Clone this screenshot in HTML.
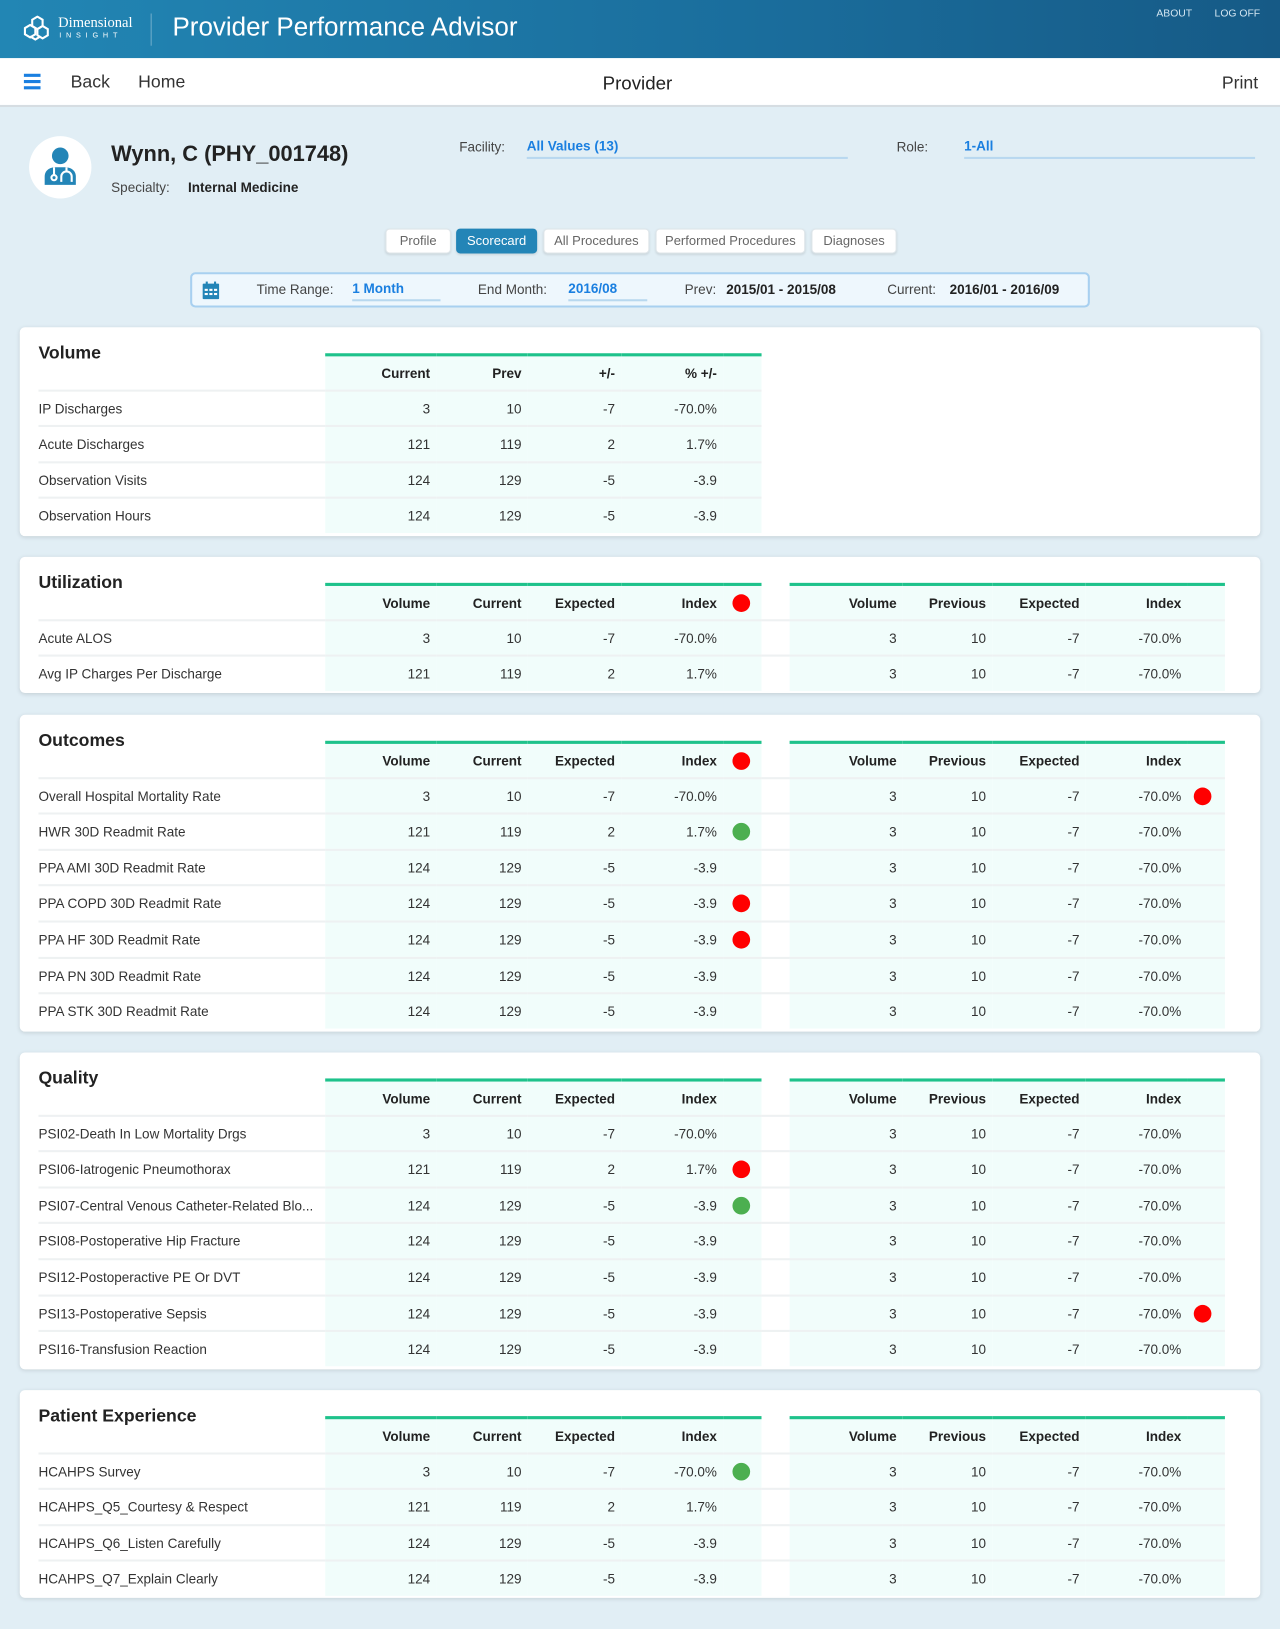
<!DOCTYPE html>
<html><head><meta charset="utf-8"><style>
*{box-sizing:border-box;margin:0;padding:0}
html,body{width:1280px;height:1629px;overflow:hidden;background:#e1eef5}
#w{position:absolute;left:0;top:0;width:1232px;height:1568px;transform:scale(1.03896);transform-origin:0 0;background:#e1eef5;font-family:"Liberation Sans",sans-serif;color:#333}
.top{position:absolute;left:0;top:0;width:1232px;height:56px;background:linear-gradient(90deg,#2286b4,#1a6d9c 60%,#165a86)}
.nav{position:absolute;left:0;top:56px;width:1232px;height:47px;background:#fff;border-bottom:2px solid #d6dde2}
.card{position:absolute;left:19px;width:1194px;background:#fff;border-radius:5px;box-shadow:0 1px 4px rgba(0,0,0,.12)}
.title{position:absolute;left:18px;top:15px;font-size:17px;font-weight:bold;color:#222;z-index:2}
.rows{position:absolute;left:18px;top:25px}
.r{display:flex;height:34.6px;font-size:13px;color:#333}
.r>div{line-height:34px;border-top:2px solid #eef1f2}
.lb{width:276px;white-space:nowrap;overflow:hidden}
.c{background:#f1fdfb;text-align:right;padding-right:6px}
.a1{width:107px}.a2{width:88px}.a3{width:90px}.a4{width:98px}.a5{width:37px}
.b1{width:109px}.b2{width:86px}.b3{width:90px}.b4{width:98px}.b5{width:36px}
.gap{width:27px;background:#fff}
.h>div{border-top:3px solid #1ec28b;font-weight:bold;color:#222;line-height:33px}
.h>.lb,.h>.gap{border-top:3px solid transparent}
.d{display:inline-block;width:17px;height:17px;border-radius:50%;vertical-align:middle;margin-top:-2px}
.R{background:#f00}.G{background:#4caf50}
.a5 .d{margin-left:-2px}.b5 .d{margin-left:-8px}
.a5,.b5{text-align:center;padding-right:0}
.tab{position:absolute;top:220px;height:24px;background:#fff;border:1px solid #dfe6ea;border-radius:4px;font-size:12.5px;color:#666;text-align:center;line-height:22px;box-shadow:0 1px 2px rgba(0,0,0,.1)}
</style></head><body><div id="w">
<div class="top">
  <svg style="position:absolute;left:22px;top:15px" width="28" height="27" viewBox="0 0 28 27"><g fill="none" stroke="#fff" stroke-width="2"><path d="M9 4l5-3 5 3v6l-5 3-5-3z"/><path d="M2 12l5-3 5 3v6l-5 3-5-3z"/><path d="M14 13l5-3 5 3v6l-5 3-5-3z"/><path d="M7 20l5 3 5-3"/></g></svg>
  <div style="position:absolute;left:56px;top:15px;font-family:'Liberation Serif',serif;font-size:14px;color:#fff">Dimensional</div>
  <div style="position:absolute;left:57px;top:31px;font-size:7px;letter-spacing:4.6px;color:#fff">INSIGHT</div>
  <div style="position:absolute;left:145px;top:13px;width:1px;height:31px;background:rgba(255,255,255,.35)"></div>
  <div style="position:absolute;left:166px;top:12px;font-size:25px;color:#fff">Provider Performance Advisor</div>
  <div style="position:absolute;left:1113px;top:8px;font-size:10px;color:#d3e6f2">ABOUT</div>
  <div style="position:absolute;left:1169px;top:8px;font-size:10px;color:#d3e6f2">LOG OFF</div>
</div>
<div class="nav">
  <div style="position:absolute;left:23px;top:15px;width:16px;height:3px;background:#1a7fe0;box-shadow:0 6px 0 #1a7fe0,0 12px 0 #1a7fe0"></div>
  <div style="position:absolute;left:68px;top:13px;font-size:17px;color:#333">Back</div>
  <div style="position:absolute;left:133px;top:13px;font-size:17px;color:#333">Home</div>
  <div style="position:absolute;left:580px;top:14px;font-size:18px;color:#222">Provider</div>
  <div style="position:absolute;left:1176px;top:14px;font-size:17px;color:#333">Print</div>
</div>
<div style="position:absolute;left:28px;top:131px;width:60px;height:60px;border-radius:50%;background:#fff"></div>
<svg style="position:absolute;left:40px;top:140px" width="36" height="40" viewBox="0 0 36 40"><circle cx="18" cy="10" r="8" fill="#2385b7"/><path d="M3 38v-8c0-6 5-9 10-9h10c5 0 10 3 10 9v8z" fill="#2385b7"/><g fill="none" stroke="#fff" stroke-width="2"><path d="M12 21v7"/><circle cx="12" cy="31" r="2.5"/><path d="M24 21v4M19 35v-5a5 5 0 0 1 10 0v5"/></g></svg>
<div style="position:absolute;left:107px;top:137px;font-size:21px;font-weight:bold;color:#222">Wynn, C (PHY_001748)</div>
<div style="position:absolute;left:107px;top:173px;font-size:13px;color:#444">Specialty:</div>
<div style="position:absolute;left:181px;top:173px;font-size:13px;font-weight:bold;color:#222">Internal Medicine</div>
<div style="position:absolute;left:442px;top:134px;font-size:13px;color:#444">Facility:</div>
<div style="position:absolute;left:507px;top:133px;width:309px;height:20px;border-bottom:2px solid #b8d8ef;font-size:13px;font-weight:bold;color:#1a7fe0">All Values (13)</div>
<div style="position:absolute;left:863px;top:134px;font-size:13px;color:#444">Role:</div>
<div style="position:absolute;left:928px;top:133px;width:280px;height:20px;border-bottom:2px solid #b8d8ef;font-size:13px;font-weight:bold;color:#1a7fe0">1-All</div>
<div class="tab" style="left:371px;width:63px">Profile</div>
<div class="tab" style="left:439px;width:78px;background:#2385b7;color:#fff;border-color:#2385b7">Scorecard</div>
<div class="tab" style="left:523px;width:102px">All Procedures</div>
<div class="tab" style="left:631px;width:144px">Performed Procedures</div>
<div class="tab" style="left:781px;width:82px">Diagnoses</div>
<div style="position:absolute;left:183px;top:262px;width:866px;height:34px;border:2px solid #a8d0f0;border-radius:5px;background:#eef7fd;font-size:13px;color:#444">
  <svg style="position:absolute;left:10px;top:7px" width="16" height="17" viewBox="0 0 16 17"><rect x="0" y="2" width="16" height="15" rx="1" fill="#2385b7"/><g fill="#fff"><rect x="2" y="7" width="3" height="2"/><rect x="6.5" y="7" width="3" height="2"/><rect x="11" y="7" width="3" height="2"/><rect x="2" y="11" width="3" height="2"/><rect x="6.5" y="11" width="3" height="2"/><rect x="11" y="11" width="3" height="2"/></g><rect x="3" y="0" width="2" height="4" fill="#2385b7"/><rect x="11" y="0" width="2" height="4" fill="#2385b7"/></svg>
  <div style="position:absolute;left:62px;top:7px">Time Range:</div>
  <div style="position:absolute;left:154px;top:6px;width:85px;height:20px;border-bottom:2px solid #b8d8ef;font-weight:bold;color:#1a7fe0">1 Month</div>
  <div style="position:absolute;left:275px;top:7px">End Month:</div>
  <div style="position:absolute;left:362px;top:6px;width:76px;height:20px;border-bottom:2px solid #b8d8ef;font-weight:bold;color:#1a7fe0">2016/08</div>
  <div style="position:absolute;left:474px;top:7px">Prev:</div>
  <div style="position:absolute;left:514px;top:7px;font-weight:bold;color:#222">2015/01 - 2015/08</div>
  <div style="position:absolute;left:669px;top:7px">Current:</div>
  <div style="position:absolute;left:729px;top:7px;font-weight:bold;color:#222">2016/01 - 2016/09</div>
</div>

<div class="card" style="top:315px;height:201px"><div class="title">Volume</div><div class="rows">
<div class="r h"><div class="lb"></div><div class="c a1">Current</div><div class="c a2">Prev</div><div class="c a3">+/-</div><div class="c a4">% +/-</div><div class="c a5"></div></div>
<div class="r"><div class="lb">IP Discharges</div><div class="c a1">3</div><div class="c a2">10</div><div class="c a3">-7</div><div class="c a4">-70.0%</div><div class="c a5"></div></div>
<div class="r"><div class="lb">Acute Discharges</div><div class="c a1">121</div><div class="c a2">119</div><div class="c a3">2</div><div class="c a4">1.7%</div><div class="c a5"></div></div>
<div class="r"><div class="lb">Observation Visits</div><div class="c a1">124</div><div class="c a2">129</div><div class="c a3">-5</div><div class="c a4">-3.9</div><div class="c a5"></div></div>
<div class="r"><div class="lb">Observation Hours</div><div class="c a1">124</div><div class="c a2">129</div><div class="c a3">-5</div><div class="c a4">-3.9</div><div class="c a5"></div></div>
</div></div>

<div class="card" style="top:536px;height:131px"><div class="title">Utilization</div><div class="rows">
<div class="r h"><div class="lb"></div><div class="c a1">Volume</div><div class="c a2">Current</div><div class="c a3">Expected</div><div class="c a4">Index</div><div class="c a5"><span class="d R"></span></div><div class="gap"></div><div class="c b1">Volume</div><div class="c b2">Previous</div><div class="c b3">Expected</div><div class="c b4">Index</div><div class="c b5"></div></div>
<div class="r"><div class="lb">Acute ALOS</div><div class="c a1">3</div><div class="c a2">10</div><div class="c a3">-7</div><div class="c a4">-70.0%</div><div class="c a5"></div><div class="gap"></div><div class="c b1">3</div><div class="c b2">10</div><div class="c b3">-7</div><div class="c b4">-70.0%</div><div class="c b5"></div></div>
<div class="r"><div class="lb">Avg IP Charges Per Discharge</div><div class="c a1">121</div><div class="c a2">119</div><div class="c a3">2</div><div class="c a4">1.7%</div><div class="c a5"></div><div class="gap"></div><div class="c b1">3</div><div class="c b2">10</div><div class="c b3">-7</div><div class="c b4">-70.0%</div><div class="c b5"></div></div>
</div></div>

<div class="card" style="top:688px;height:305px"><div class="title">Outcomes</div><div class="rows">
<div class="r h"><div class="lb"></div><div class="c a1">Volume</div><div class="c a2">Current</div><div class="c a3">Expected</div><div class="c a4">Index</div><div class="c a5"><span class="d R"></span></div><div class="gap"></div><div class="c b1">Volume</div><div class="c b2">Previous</div><div class="c b3">Expected</div><div class="c b4">Index</div><div class="c b5"></div></div>
<div class="r"><div class="lb">Overall Hospital Mortality Rate</div><div class="c a1">3</div><div class="c a2">10</div><div class="c a3">-7</div><div class="c a4">-70.0%</div><div class="c a5"></div><div class="gap"></div><div class="c b1">3</div><div class="c b2">10</div><div class="c b3">-7</div><div class="c b4">-70.0%</div><div class="c b5"><span class="d R"></span></div></div>
<div class="r"><div class="lb">HWR 30D Readmit Rate</div><div class="c a1">121</div><div class="c a2">119</div><div class="c a3">2</div><div class="c a4">1.7%</div><div class="c a5"><span class="d G"></span></div><div class="gap"></div><div class="c b1">3</div><div class="c b2">10</div><div class="c b3">-7</div><div class="c b4">-70.0%</div><div class="c b5"></div></div>
<div class="r"><div class="lb">PPA AMI 30D Readmit Rate</div><div class="c a1">124</div><div class="c a2">129</div><div class="c a3">-5</div><div class="c a4">-3.9</div><div class="c a5"></div><div class="gap"></div><div class="c b1">3</div><div class="c b2">10</div><div class="c b3">-7</div><div class="c b4">-70.0%</div><div class="c b5"></div></div>
<div class="r"><div class="lb">PPA COPD 30D Readmit Rate</div><div class="c a1">124</div><div class="c a2">129</div><div class="c a3">-5</div><div class="c a4">-3.9</div><div class="c a5"><span class="d R"></span></div><div class="gap"></div><div class="c b1">3</div><div class="c b2">10</div><div class="c b3">-7</div><div class="c b4">-70.0%</div><div class="c b5"></div></div>
<div class="r"><div class="lb">PPA HF 30D Readmit Rate</div><div class="c a1">124</div><div class="c a2">129</div><div class="c a3">-5</div><div class="c a4">-3.9</div><div class="c a5"><span class="d R"></span></div><div class="gap"></div><div class="c b1">3</div><div class="c b2">10</div><div class="c b3">-7</div><div class="c b4">-70.0%</div><div class="c b5"></div></div>
<div class="r"><div class="lb">PPA PN 30D Readmit Rate</div><div class="c a1">124</div><div class="c a2">129</div><div class="c a3">-5</div><div class="c a4">-3.9</div><div class="c a5"></div><div class="gap"></div><div class="c b1">3</div><div class="c b2">10</div><div class="c b3">-7</div><div class="c b4">-70.0%</div><div class="c b5"></div></div>
<div class="r"><div class="lb">PPA STK 30D Readmit Rate</div><div class="c a1">124</div><div class="c a2">129</div><div class="c a3">-5</div><div class="c a4">-3.9</div><div class="c a5"></div><div class="gap"></div><div class="c b1">3</div><div class="c b2">10</div><div class="c b3">-7</div><div class="c b4">-70.0%</div><div class="c b5"></div></div>
</div></div>

<div class="card" style="top:1013px;height:305px"><div class="title">Quality</div><div class="rows">
<div class="r h"><div class="lb"></div><div class="c a1">Volume</div><div class="c a2">Current</div><div class="c a3">Expected</div><div class="c a4">Index</div><div class="c a5"></div><div class="gap"></div><div class="c b1">Volume</div><div class="c b2">Previous</div><div class="c b3">Expected</div><div class="c b4">Index</div><div class="c b5"></div></div>
<div class="r"><div class="lb">PSI02-Death In Low Mortality Drgs</div><div class="c a1">3</div><div class="c a2">10</div><div class="c a3">-7</div><div class="c a4">-70.0%</div><div class="c a5"></div><div class="gap"></div><div class="c b1">3</div><div class="c b2">10</div><div class="c b3">-7</div><div class="c b4">-70.0%</div><div class="c b5"></div></div>
<div class="r"><div class="lb">PSI06-Iatrogenic Pneumothorax</div><div class="c a1">121</div><div class="c a2">119</div><div class="c a3">2</div><div class="c a4">1.7%</div><div class="c a5"><span class="d R"></span></div><div class="gap"></div><div class="c b1">3</div><div class="c b2">10</div><div class="c b3">-7</div><div class="c b4">-70.0%</div><div class="c b5"></div></div>
<div class="r"><div class="lb">PSI07-Central Venous Catheter-Related Blo...</div><div class="c a1">124</div><div class="c a2">129</div><div class="c a3">-5</div><div class="c a4">-3.9</div><div class="c a5"><span class="d G"></span></div><div class="gap"></div><div class="c b1">3</div><div class="c b2">10</div><div class="c b3">-7</div><div class="c b4">-70.0%</div><div class="c b5"></div></div>
<div class="r"><div class="lb">PSI08-Postoperative Hip Fracture</div><div class="c a1">124</div><div class="c a2">129</div><div class="c a3">-5</div><div class="c a4">-3.9</div><div class="c a5"></div><div class="gap"></div><div class="c b1">3</div><div class="c b2">10</div><div class="c b3">-7</div><div class="c b4">-70.0%</div><div class="c b5"></div></div>
<div class="r"><div class="lb">PSI12-Postoperactive PE Or DVT</div><div class="c a1">124</div><div class="c a2">129</div><div class="c a3">-5</div><div class="c a4">-3.9</div><div class="c a5"></div><div class="gap"></div><div class="c b1">3</div><div class="c b2">10</div><div class="c b3">-7</div><div class="c b4">-70.0%</div><div class="c b5"></div></div>
<div class="r"><div class="lb">PSI13-Postoperative Sepsis</div><div class="c a1">124</div><div class="c a2">129</div><div class="c a3">-5</div><div class="c a4">-3.9</div><div class="c a5"></div><div class="gap"></div><div class="c b1">3</div><div class="c b2">10</div><div class="c b3">-7</div><div class="c b4">-70.0%</div><div class="c b5"><span class="d R"></span></div></div>
<div class="r"><div class="lb">PSI16-Transfusion Reaction</div><div class="c a1">124</div><div class="c a2">129</div><div class="c a3">-5</div><div class="c a4">-3.9</div><div class="c a5"></div><div class="gap"></div><div class="c b1">3</div><div class="c b2">10</div><div class="c b3">-7</div><div class="c b4">-70.0%</div><div class="c b5"></div></div>
</div></div>

<div class="card" style="top:1338px;height:200px"><div class="title">Patient Experience</div><div class="rows">
<div class="r h"><div class="lb"></div><div class="c a1">Volume</div><div class="c a2">Current</div><div class="c a3">Expected</div><div class="c a4">Index</div><div class="c a5"></div><div class="gap"></div><div class="c b1">Volume</div><div class="c b2">Previous</div><div class="c b3">Expected</div><div class="c b4">Index</div><div class="c b5"></div></div>
<div class="r"><div class="lb">HCAHPS Survey</div><div class="c a1">3</div><div class="c a2">10</div><div class="c a3">-7</div><div class="c a4">-70.0%</div><div class="c a5"><span class="d G"></span></div><div class="gap"></div><div class="c b1">3</div><div class="c b2">10</div><div class="c b3">-7</div><div class="c b4">-70.0%</div><div class="c b5"></div></div>
<div class="r"><div class="lb">HCAHPS_Q5_Courtesy &amp; Respect</div><div class="c a1">121</div><div class="c a2">119</div><div class="c a3">2</div><div class="c a4">1.7%</div><div class="c a5"></div><div class="gap"></div><div class="c b1">3</div><div class="c b2">10</div><div class="c b3">-7</div><div class="c b4">-70.0%</div><div class="c b5"></div></div>
<div class="r"><div class="lb">HCAHPS_Q6_Listen Carefully</div><div class="c a1">124</div><div class="c a2">129</div><div class="c a3">-5</div><div class="c a4">-3.9</div><div class="c a5"></div><div class="gap"></div><div class="c b1">3</div><div class="c b2">10</div><div class="c b3">-7</div><div class="c b4">-70.0%</div><div class="c b5"></div></div>
<div class="r"><div class="lb">HCAHPS_Q7_Explain Clearly</div><div class="c a1">124</div><div class="c a2">129</div><div class="c a3">-5</div><div class="c a4">-3.9</div><div class="c a5"></div><div class="gap"></div><div class="c b1">3</div><div class="c b2">10</div><div class="c b3">-7</div><div class="c b4">-70.0%</div><div class="c b5"></div></div>
</div></div>
</div></body></html>
